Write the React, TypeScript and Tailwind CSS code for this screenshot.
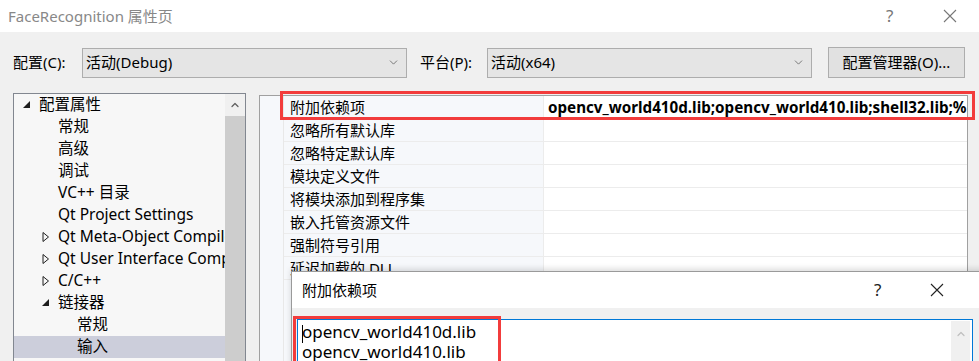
import { ChevronDown, ChevronUp } from 'lucide-react';

const font = "font-['Noto_Sans','Noto_Sans_CJK_SC',sans-serif]";

interface TreeItem {
  label: string;
  level: number;
  arrow?: 'open' | 'closed';
  selected?: boolean;
}

const treeItems: TreeItem[] = [
  { label: '配置属性', level: 0, arrow: 'open' },
  { label: '常规', level: 1 },
  { label: '高级', level: 1 },
  { label: '调试', level: 1 },
  { label: 'VC++ 目录', level: 1 },
  { label: 'Qt Project Settings', level: 1 },
  { label: 'Qt Meta-Object Compiler', level: 1, arrow: 'closed' },
  { label: 'Qt User Interface Compiler', level: 1, arrow: 'closed' },
  { label: 'C/C++', level: 1, arrow: 'closed' },
  { label: '链接器', level: 1, arrow: 'open' },
  { label: '常规', level: 2 },
  { label: '输入', level: 2, selected: true },
];

const gridRows = [
  { name: '附加依赖项', value: 'opencv_world410d.lib;opencv_world410.lib;shell32.lib;%' },
  { name: '忽略所有默认库', value: '' },
  { name: '忽略特定默认库', value: '' },
  { name: '模块定义文件', value: '' },
  { name: '将模块添加到程序集', value: '' },
  { name: '嵌入托管资源文件', value: '' },
  { name: '强制符号引用', value: '' },
  { name: '延迟加载的 DLL', value: '' },
];

const OpenArrow = () => (
  <svg width="8" height="8" viewBox="0 0 8 8">
    <polygon points="7,0 7,7 0,7" fill="#1e1e1e" />
  </svg>
);

const ClosedArrow = () => (
  <svg width="8" height="10" viewBox="0 0 8 10">
    <polygon points="1,0.5 6.5,5 1,9.5" fill="none" stroke="#1e1e1e" strokeWidth="1" />
  </svg>
);

const CloseX = ({ color }: { color: string }) => (
  <svg width="14" height="14" viewBox="0 0 14 14">
    <path d="M1 1 L13 13 M13 1 L1 13" stroke={color} strokeWidth="1.1" />
  </svg>
);

const Combo = ({ text }: { text: string }) => (
  <div className="w-[325px] h-[30px] border border-[#adadad] bg-[#e5e5e5] flex items-center justify-between pl-[3px] pr-[6px]">
    <span>{text}</span>
    <ChevronDown className="w-[13px] h-[13px] text-[#606060]" strokeWidth={1.5} />
  </div>
);

const Tree = () => (
  <div className="w-[233px] h-[280px] border border-[#828790] bg-[#f7f7f7] flex shrink-0">
    <div className="flex-1 overflow-hidden">
      {treeItems.map((item, i) => (
        <div
          key={i}
          className={`h-[22px] flex items-center whitespace-nowrap ${item.selected ? 'bg-[#cccedb]' : ''}`}
          style={{ paddingLeft: 9 + item.level * 19 }}
        >
          <span className="w-[16px] shrink-0 flex items-center">
            {item.arrow === 'open' && <OpenArrow />}
            {item.arrow === 'closed' && <ClosedArrow />}
          </span>
          <span className="text-[15.5px]">{item.label}</span>
        </div>
      ))}
    </div>
    <div className="w-[20px] bg-[#f0f0f0] flex flex-col">
      <div className="h-[22px] flex items-center justify-center">
        <ChevronUp className="w-[12px] h-[12px] text-[#606060]" strokeWidth={2.5} />
      </div>
      <div className="flex-1 bg-[#cdcdcd]" />
    </div>
  </div>
);

const Grid = () => (
  <div className="w-[709px] h-[280px] mt-[2px] border border-[#a0a0a0] bg-[#f6f8fb] flex shrink-0">
    <div className="w-[24px] border-r border-[#e8e8e8]" />
    <div className="flex-1">
      {gridRows.map((row, i) => (
        <div key={i} className="h-[23px] flex border-b border-[#ececec] whitespace-nowrap">
          <div className="w-[260px] pl-[6px] flex items-center border-r border-[#ececec]">{row.name}</div>
          <div className="flex-1 bg-white pl-[4px] flex items-center font-bold text-[15.2px] overflow-hidden">{row.value}</div>
        </div>
      ))}
    </div>
  </div>
);

const SubDialog = () => (
  <div className="absolute left-[291px] top-[271px] w-[700px] h-[100px] bg-[#f0f0f0] border border-[#9a9a9a] shadow-[0_-2px_6px_rgba(0,0,0,0.15)]">
    <div className="h-[36px] bg-white flex items-center pl-[10px]">
      <span className="flex-1">附加依赖项</span>
      <span className="w-[58px] text-[#222] text-[17px] mr-[-2px]">?</span>
      <span className="w-[60px] flex"><CloseX color="#222" /></span>
    </div>
    <div className="pt-[11px] pl-[5px]">
      <div className="w-[676px] h-[60px] border border-[#0078d7] bg-white flex">
        <div className="flex-1 pl-[4px] pt-[2px] leading-[20px] text-[17px] relative">
          <span className="absolute left-[4px] top-[5px] w-px h-[18px] bg-black" />
          <div>opencv_world410d.lib</div>
          <div>opencv_world410.lib</div>
        </div>
        <div className="w-[19px] mr-[2px] mt-[1px] bg-[#f0f0f0] flex justify-center pt-[7px]">
          <ChevronUp className="w-[12px] h-[12px] text-[#c0c0c0]" strokeWidth={2.5} />
        </div>
      </div>
    </div>
  </div>
);

export default function App() {
  return (
    <div className={`w-[979px] h-[361px] relative overflow-hidden bg-[#f0f0f0] text-[15px] text-black ${font}`}>
      <div className="h-[32px] bg-white flex items-center pl-[8px]">
        <span className="flex-1 text-[#888888]">FaceRecognition 属性页</span>
        <span className="w-[57px] text-[#777] text-[17px]">?</span>
        <span className="w-[36px] flex"><CloseX color="#777" /></span>
      </div>
      <div className="flex items-center pt-[15px] pl-[13px]">
        <span className="w-[69px]">配置(C):</span>
        <Combo text="活动(Debug)" />
        <span className="ml-[13px] w-[67px]">平台(P):</span>
        <Combo text="活动(x64)" />
        <div className="ml-[16px] w-[137px] h-[31px] border border-[#adadad] bg-[#e1e1e1] flex items-center justify-center">
          配置管理器(O)...
        </div>
      </div>
      <div className="flex gap-[13px] pt-[15px] pl-[13px]">
        <Tree />
        <Grid />
      </div>
      <SubDialog />
      <div className="absolute left-[280px] top-[91px] w-[695px] h-[29px] border-[3px] border-[#f23c3c]" />
      <div className="absolute left-[293px] top-[316px] w-[208px] h-[60px] border-[3px] border-[#f23c3c]" />
    </div>
  );
}
